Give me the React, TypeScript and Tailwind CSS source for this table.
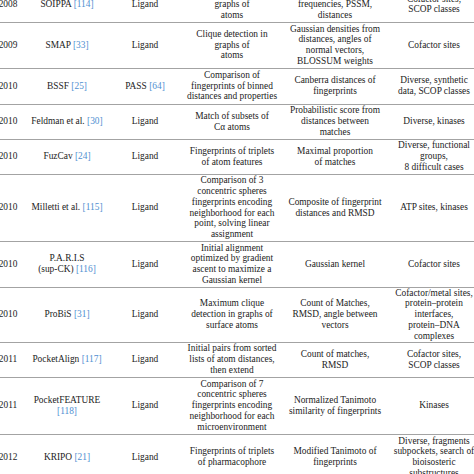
import React from "react";

type Row = {
  year: string;
  name: React.ReactNode;
  ref: React.ReactNode;
  desc: string[];
  sim: string[];
  data: string[];
  h: string;
};

const Cite = ({ n }: { n: string }) => <span className="text-[#4f8fd1]">[{n}]</span>;

const rows: Row[] = [
  {
    year: "2008",
    name: <>SOIPPA <Cite n="114" /></>,
    ref: "Ligand",
    desc: ["Clique detection in", "graphs of", "atoms"],
    sim: ["Residue types,", "frequencies, PSSM,", "distances"],
    data: ["Cofactor sites,", "SCOP classes"],
    h: "h-[35px]",
  },
  {
    year: "2009",
    name: <>SMAP <Cite n="33" /></>,
    ref: "Ligand",
    desc: ["Clique detection in", "graphs of", "atoms"],
    sim: ["Gaussian densities from", "distances, angles of", "normal vectors,", "BLOSSUM weights"],
    data: ["Cofactor sites"],
    h: "h-[46px]",
  },
  {
    year: "2010",
    name: <>BSSF <Cite n="25" /></>,
    ref: <>PASS <Cite n="64" /></>,
    desc: ["Comparison of", "fingerprints of binned", "distances and properties"],
    sim: ["Canberra distances of", "fingerprints"],
    data: ["Diverse, synthetic", "data, SCOP classes"],
    h: "h-[36px]",
  },
  {
    year: "2010",
    name: <>Feldman et al. <Cite n="30" /></>,
    ref: "Ligand",
    desc: ["Match of subsets of", "Cα atoms"],
    sim: ["Probabilistic score from", "distances between", "matches"],
    data: ["Diverse, kinases"],
    h: "h-[35px]",
  },
  {
    year: "2010",
    name: <>FuzCav <Cite n="24" /></>,
    ref: "Ligand",
    desc: ["Fingerprints of triplets", "of atom features"],
    sim: ["Maximal proportion", "of matches"],
    data: ["Diverse, functional", "groups,", "8 difficult cases"],
    h: "h-[35px]",
  },
  {
    year: "2010",
    name: <>Milletti et al. <Cite n="115" /></>,
    ref: "Ligand",
    desc: [
      "Comparison of 3",
      "concentric spheres",
      "fingerprints encoding",
      "neighborhood for each",
      "point, solving linear",
      "assignment",
    ],
    sim: ["Composite of fingerprint", "distances and RMSD"],
    data: ["ATP sites, kinases"],
    h: "h-[67px]",
  },
  {
    year: "2010",
    name: <>P.A.R.I.S<br />(sup-CK) <Cite n="116" /></>,
    ref: "Ligand",
    desc: ["Initial alignment", "optimized by gradient", "ascent to maximize a", "Gaussian kernel"],
    sim: ["Gaussian kernel"],
    data: ["Cofactor sites"],
    h: "h-[46px]",
  },
  {
    year: "2010",
    name: <>ProBiS <Cite n="31" /></>,
    ref: "Ligand",
    desc: ["Maximum clique", "detection in graphs of", "surface atoms"],
    sim: ["Count of Matches,", "RMSD, angle between", "vectors"],
    data: ["Cofactor/metal sites,", "protein–protein", "interfaces,", "protein–DNA", "complexes"],
    h: "h-[55px]",
  },
  {
    year: "2011",
    name: <>PocketAlign <Cite n="117" /></>,
    ref: "Ligand",
    desc: ["Initial pairs from sorted", "lists of atom distances,", "then extend"],
    sim: ["Count of matches,", "RMSD"],
    data: ["Cofactor sites,", "SCOP classes"],
    h: "h-[35px]",
  },
  {
    year: "2011",
    name: <>PocketFEATURE<br /><Cite n="118" /></>,
    ref: "Ligand",
    desc: [
      "Comparison of 7",
      "concentric spheres",
      "fingerprints encoding",
      "neighborhood for each",
      "microenvironment",
    ],
    sim: ["Normalized Tanimoto", "similarity of fingerprints"],
    data: ["Kinases"],
    h: "h-[57px]",
  },
  {
    year: "2012",
    name: <>KRIPO <Cite n="21" /></>,
    ref: "Ligand",
    desc: ["Fingerprints of triplets", "of pharmacophore"],
    sim: ["Modified Tanimoto of", "fingerprints"],
    data: ["Diverse, fragments", "subpockets, search of", "bioisosteric", "substructures"],
    h: "h-[46px]",
  },
];

const Lines = ({ items }: { items: string[] }) => (
  <>
    {items.map((t, i) => (
      <div key={i}>{t}</div>
    ))}
  </>
);

export default function App() {
  return (
    <div className="w-[474px] h-[474px] overflow-hidden bg-white">
      <table
        className="table-fixed border-collapse w-[490px] ml-[-12px] mt-[-13px] text-[9.4px] leading-[10.7px] text-[#1c1c1c] whitespace-nowrap"
        style={{ fontFamily: '"Liberation Serif", "Times New Roman", serif' }}
      >
        <colgroup>
          <col className="w-[40px]" />
          <col className="w-[78px]" />
          <col className="w-[78px]" />
          <col className="w-[96px]" />
          <col className="w-[110px]" />
          <col className="w-[88px]" />
        </colgroup>
        <tbody>
          {rows.map((r, i) => (
            <tr key={i} className={`${r.h} border-b-[1.5px] border-[#a3a3a3] text-center align-middle`}>
              <td>{r.year}</td>
              <td>{r.name}</td>
              <td>{r.ref}</td>
              <td><Lines items={r.desc} /></td>
              <td><Lines items={r.sim} /></td>
              <td><Lines items={r.data} /></td>
            </tr>
          ))}
        </tbody>
      </table>
    </div>
  );
}
